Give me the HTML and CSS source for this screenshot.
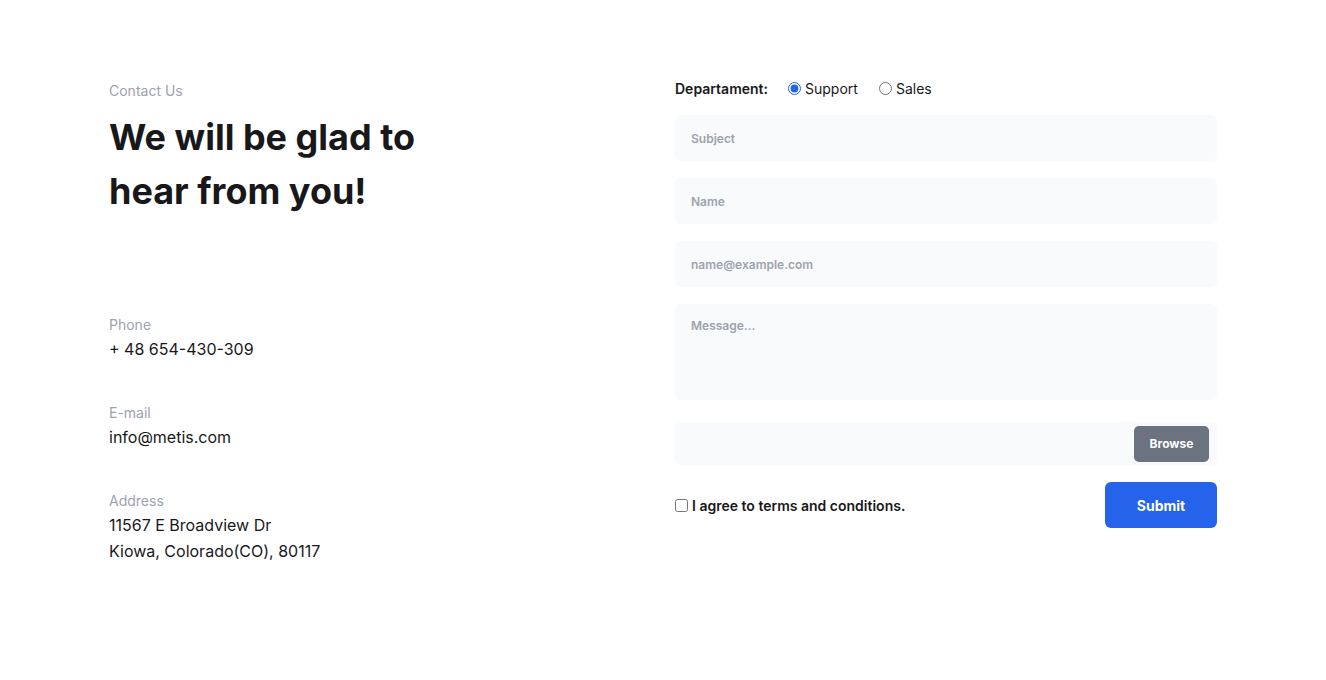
FILE: index.html
```html
<!DOCTYPE html>
<html>
<head>
<meta charset="utf-8">
<link rel="stylesheet" href="styles.css">
</head>
<body>
<div class="wrap">
  <section class="info">
    <div class="eyebrow">Contact Us</div>
    <h1 class="title">We will be glad to hear from you!</h1>
    <div class="items">
      <div class="item">
        <div class="label">Phone</div>
        <div class="value">+ 48 654-430-309</div>
      </div>
      <div class="item">
        <div class="label">E-mail</div>
        <div class="value">info@metis.com</div>
      </div>
      <div class="item">
        <div class="label">Address</div>
        <div class="value">11567 E Broadview Dr<br>Kiowa, Colorado(CO), 80117</div>
      </div>
    </div>
  </section>
  <form class="form">
    <div class="dept">
      <span class="dept-label">Departament:</span>
      <label class="radio"><input type="radio" name="d" checked> Support</label>
      <label class="radio"><input type="radio" name="d"> Sales</label>
    </div>
    <input class="field" type="text" placeholder="Subject">
    <input class="field" type="text" placeholder="Name">
    <input class="field" type="text" placeholder="name@example.com">
    <textarea class="field area" placeholder="Message..."></textarea>
    <div class="file"><button type="button" class="browse">Browse</button></div>
    <div class="bottom">
      <label class="agree"><input type="checkbox"> I agree to terms and conditions.</label>
      <button type="button" class="submit">Submit</button>
    </div>
  </form>
</div>
</body>
</html>
```
FILE: styles.css
```css
* { box-sizing: border-box; }
body {
  margin: 0;
  background: #fff;
  font-family: Inter, "Noto Sans", sans-serif;
  color: #18181b;
}
.wrap {
  width: 1108px;
  margin: 0 auto;
  padding-top: 81px;
  display: flex;
  justify-content: space-between;
}
.info { width: 440px; }
.eyebrow {
  font-size: 14px;
  line-height: 20px;
  color: #9ca3af;
}
.title {
  margin: 9px 0 0;
  width: 330px;
  font-size: 36px;
  line-height: 54px;
  font-weight: 700;
  color: #18181b;
}
.items {
  margin-top: 97px;
  display: flex;
  flex-direction: column;
  gap: 41px;
}
.label {
  font-size: 14px;
  line-height: 20px;
  color: #9ca3af;
}
.value {
  margin-top: 1px;
  font-size: 16px;
  line-height: 26px;
  color: #18181b;
}
.form {
  width: 542px;
  margin-top: -3px;
  display: flex;
  flex-direction: column;
}
.dept {
  display: flex;
  align-items: center;
  height: 20px;
  font-size: 14px;
  color: #18181b;
}
.dept-label { font-weight: 600; margin-right: 20px; }
.radio {
  display: flex;
  align-items: center;
  margin-right: 21px;
}
.radio input { margin: 0 4px 0 0; width: 13px; height: 13px; accent-color: #2563eb; }
.field {
  display: block;
  width: 100%;
  height: 46px;
  margin-top: 17px;
  border: none;
  outline: none;
  border-radius: 6px;
  background: #f9fafb;
  padding: 0 16px;
  font-family: Inter, sans-serif;
  font-size: 12px;
  font-weight: 600;
  color: #18181b;
}
.field::placeholder { color: #9ca3af; }
.area {
  height: 96px;
  padding: 14px 16px;
  resize: none;
}
.file {
  margin-top: 22px;
  height: 43px;
  border-radius: 6px;
  background: #f9fafb;
  display: flex;
  align-items: center;
  justify-content: flex-end;
  padding-right: 8px;
}
.browse {
  width: 75px;
  height: 36px;
  border: none;
  border-radius: 5px;
  background: #6b7280;
  color: #fff;
  font-family: Inter, sans-serif;
  font-size: 12px;
  font-weight: 700;
}
.bottom {
  margin-top: 17px;
  display: flex;
  justify-content: space-between;
  align-items: center;
}
.agree {
  display: flex;
  align-items: center;
  font-size: 14px;
  font-weight: 600;
  color: #18181b;
}
.agree input { margin: 0 4px 0 0; width: 13px; height: 13px; }
.submit {
  width: 112px;
  height: 46px;
  border: none;
  border-radius: 6px;
  background: #2563eb;
  color: #fff;
  font-family: Inter, sans-serif;
  font-size: 14px;
  font-weight: 700;
}
```
